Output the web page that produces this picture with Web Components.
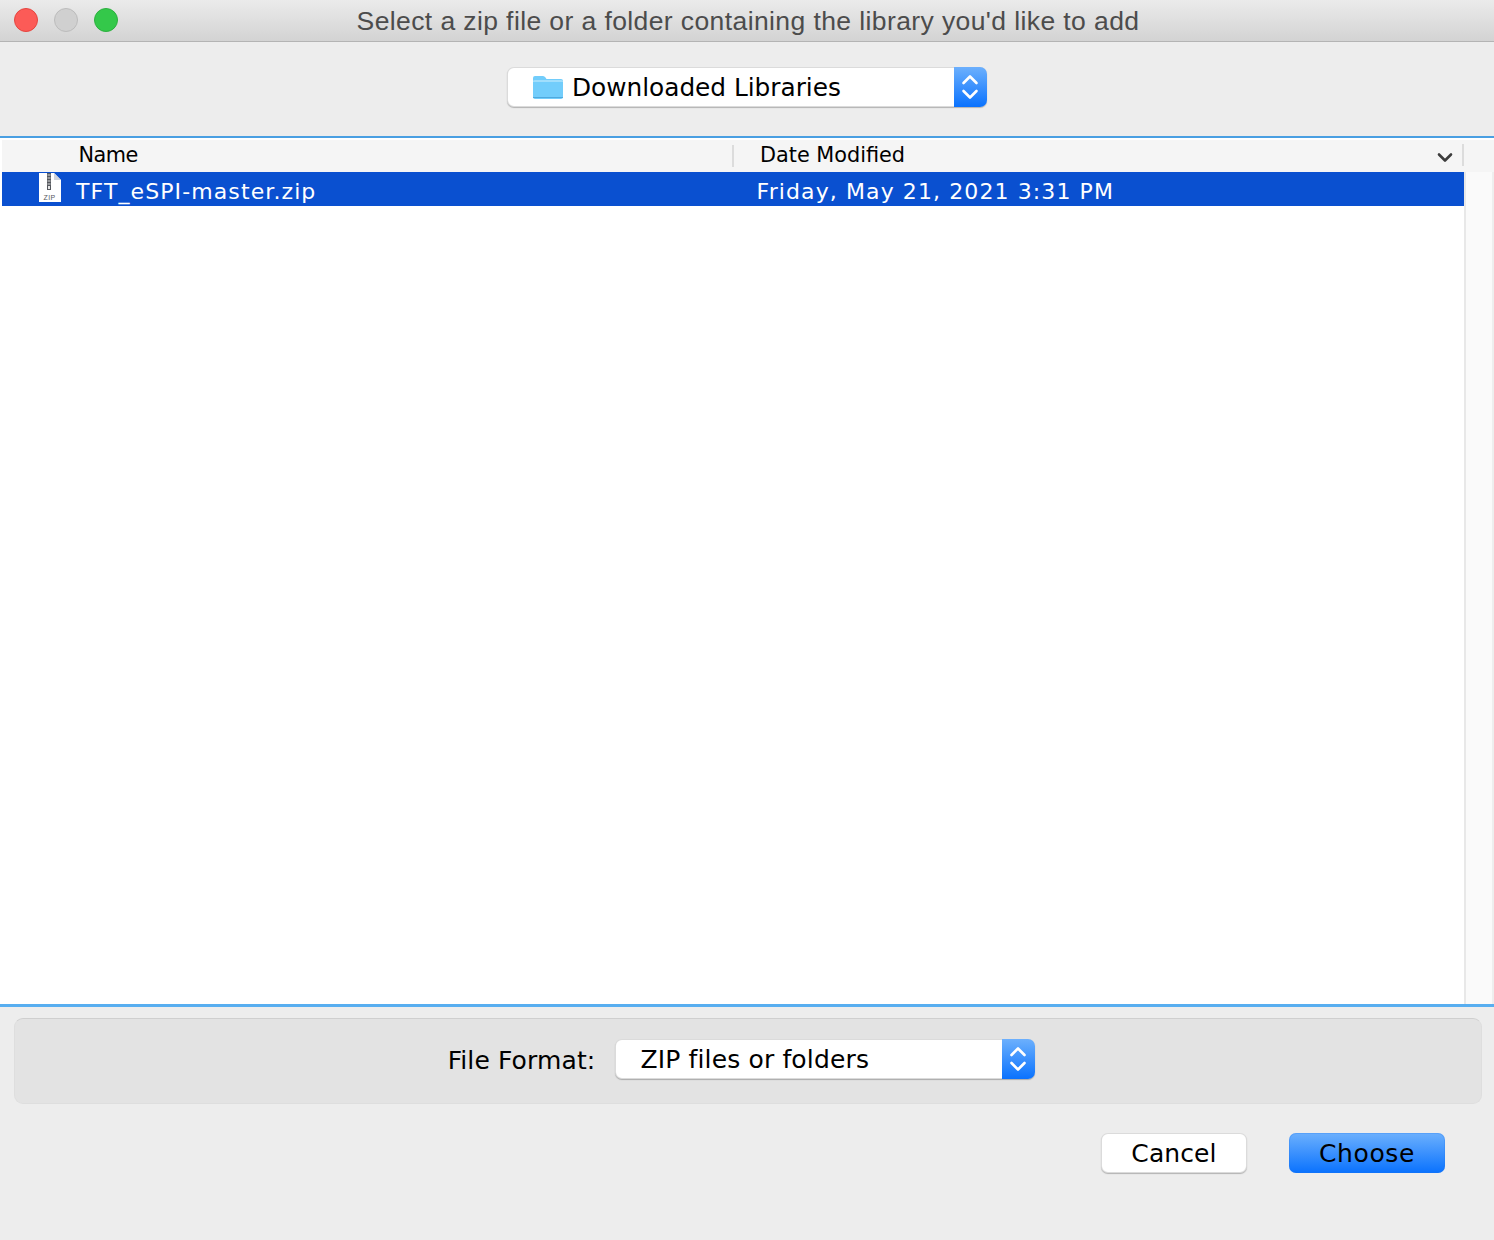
<!DOCTYPE html>
<html>
<head>
<meta charset="utf-8">
<title>Choose library</title>
<style>
  html, body { margin: 0; padding: 0; height: 100%; background: #ededed; }
  body { font-family: "DejaVu Sans", sans-serif; }
  dialog-window { height: 1240px; }
</style>
</head>
<body>

<template id="title-bar-tpl">
  <style>
    :host { display: flex; align-items: center; height: 41px; position: relative; flex: none; box-sizing: content-box;
      background: linear-gradient(#ebebeb, #d3d3d3); border-bottom: 1px solid #b4b4b4; }
    .lights { display: flex; gap: 16px; padding-left: 14px; margin-bottom: 1px; }
    .light { width: 24px; height: 24px; border-radius: 50%; box-sizing: border-box; border: 1px solid; }
    .close { background: #fc5b57; border-color: #e5453f; }
    .min { background: #d0d0d0; border-color: #bcbcbc; }
    .max { background: #34c84a; border-color: #2cb03f; }
    .title { position: absolute; left: 0; right: 0; top: 0; bottom: 0; display: flex; align-items: center; justify-content: center;
      font: 26.5px "Liberation Sans", sans-serif; letter-spacing: .4px; color: #4c4c4c; padding-top: 1px; padding-left: 2px; }
  </style>
  <div class="lights">
    <div class="light close"></div>
    <div class="light min"></div>
    <div class="light max"></div>
  </div>
  <div class="title"><slot></slot></div>
</template>

<template id="pop-select-tpl">
  <style>
    :host { display: flex; height: 40px; box-sizing: border-box; border-radius: 7px; background: #fff;
      box-shadow: inset 0 0 0 1px rgba(0,0,0,.14), 0 1px 1px rgba(0,0,0,.25); font-size: 25px; color: #000; }
    .label { flex: 1; display: flex; align-items: center; gap: 8px; min-width: 0; white-space: nowrap; }
    .label span { letter-spacing: -.02px; }
    .stepper { width: 33px; flex: none; border-radius: 0 7px 7px 0; background: linear-gradient(#6cb0fd, #0a72fe);
      display: flex; align-items: center; justify-content: center; padding-right: 1px; box-sizing: border-box; }
    ::slotted(svg) { flex: none; }
  </style>
  <div class="label"><slot name="icon"></slot><span><slot></slot></span></div>
  <div class="stepper">
    <svg width="18" height="30" viewBox="0 0 18 30" fill="none" stroke="#fff" stroke-width="2.6" stroke-linecap="round" stroke-linejoin="round">
      <path d="M2.5 11 9 4.5 15.500 11"/><path d="M2.500 19 9 25.500 15.500 19"/>
    </svg>
  </div>
</template>

<template id="file-table-tpl">
  <style>
    :host { display: flex; flex-direction: column; flex: 1; min-height: 0; background: #fff;
      border-top: 2px solid #4a9fe2; border-bottom: 3px solid #58aef0; }
    .head { height: 34px; flex: none; box-sizing: border-box; margin-left: 2px; background: #f5f5f5; border-top: 2px solid #fff;
      display: flex; align-items: center; font-size: 20.800px; color: #000; position: relative; }
    .name-h { width: 732px; padding-left: 76.500px; box-sizing: border-box; height: 22px; line-height: 20px; border-right: 2px solid #dcdcdc; flex: none; letter-spacing: -.5px; }
    .date-h { padding-left: 26px; flex: 1; line-height: 20px; height: 22px; }
    .chev { position: absolute; left: 1435px; top: 12px; }
    .sep { position: absolute; left: 1460px; top: 4px; width: 2px; height: 22px; background: #dcdcdc; }
    .body { flex: 1; display: flex; min-height: 0; }
    .rows { flex: 1; margin-left: 2px; }
    .scroll { width: 30px; flex: none; box-sizing: border-box; background: #fafafa; border-left: 2px solid #e8e8e8; border-right: 2px solid #eee; }
  </style>
  <div class="head">
    <div class="name-h">Name</div>
    <div class="date-h">Date Modified</div>
    <svg class="chev" width="16" height="11" viewBox="0 0 16 11" fill="none" stroke="#3c3c3c" stroke-width="2.600" stroke-linecap="round" stroke-linejoin="round"><path d="M2 2.500 8 8.500 14 2.500"/></svg>
    <div class="sep"></div>
  </div>
  <div class="body">
    <div class="rows"><slot></slot></div>
    <div class="scroll"></div>
  </div>
</template>

<template id="file-row-tpl">
  <style>
    :host { display: flex; align-items: center; height: 34px; box-sizing: border-box; padding-top: 5px; background: #0a50d0; color: #fff;
      font-size: 22px; letter-spacing: 1.100px; position: relative; white-space: nowrap; }
    .name { width: 754.500px; flex: none; padding-left: 74px; box-sizing: border-box; display: block; }
    svg { position: absolute; left: 34px; top: 0; }
  </style>
  <svg width="26" height="31" viewBox="0 0 26 31">
    <path d="M3 1H18L25 8V30H3Z" fill="#fff"/>
    <path d="M18 1V8H25Z" fill="#cfd3dc"/>
    <rect x="11" y="1" width="4" height="17" fill="#55585e"/>
    <path d="M11.500 3h3M11.500 6h3M11.500 9h3M11.500 12h3" stroke="#dcdcdc" stroke-width="1"/>
    <rect x="12" y="14" width="2" height="3" fill="#e6e6e6"/>
    <text x="13.500" y="28" text-anchor="middle" font-size="7" font-family="Liberation Sans, sans-serif" fill="#55585e" letter-spacing=".3">ZIP</text>
  </svg>
  <span class="name"><slot name="name"></slot></span>
  <span><slot name="date"></slot></span>
</template>

<template id="format-panel-tpl">
  <style>
    :host { display: flex; align-items: center; justify-content: center; height: 86px; box-sizing: border-box; margin: 11px 12px 0 14px;
      background: #e3e3e3; border: 1px solid #dedede; border-top-color: #cfcfcf; border-radius: 9px; font-size: 25px; color: #000; }
    .inner { display: flex; align-items: center; gap: 20px; margin-bottom: 4px; margin-right: 13px; }
    .lbl { letter-spacing: .12px; margin-top: 3px; }
  </style>
  <div class="inner"><span class="lbl"><slot name="label"></slot></span><slot></slot></div>
</template>

<template id="push-button-tpl">
  <style>
    :host { display: flex; align-items: center; justify-content: center; height: 40px; box-sizing: border-box; border-radius: 7px;
      font-size: 25px; letter-spacing: .1px; color: #000; background: #fff; flex: none;
      box-shadow: inset 0 0 0 1px rgba(0,0,0,.14), 0 1px 1px rgba(0,0,0,.25); }
    :host([primary]) { letter-spacing: .6px; background: linear-gradient(#6cb0fd, #0a72fe); box-shadow: inset 0 0 0 1px rgba(30,120,240,.25); }
  </style>
  <slot></slot>
</template>

<template id="dialog-window-tpl">
  <style>
    :host { display: flex; flex-direction: column; background: #ededed; color: #000; }
    .toolbar { height: 94px; flex: none; display: flex; justify-content: center; align-items: flex-start; padding-top: 25px; box-sizing: border-box; }
    .toolbar ::slotted(pop-select) { width: 480px; }
    .footer { flex: none; }
    .actions { display: flex; justify-content: flex-end; gap: 42px; padding: 29px 49px 67px 0; }
  </style>
  <slot name="titlebar"></slot>
  <div class="toolbar"><slot name="toolbar"></slot></div>
  <slot name="table"></slot>
  <div class="footer">
    <slot name="format"></slot>
    <div class="actions"><slot name="actions"></slot></div>
  </div>
</template>

<dialog-window>
  <title-bar slot="titlebar">Select a zip file or a folder containing the library you'd like to add</title-bar>

  <pop-select slot="toolbar">
    <svg slot="icon" style="margin-left:25px" width="32" height="26" viewBox="0 0 32 26">
      <path d="M1 4Q1 2 3 2H11Q12.500 2 13.500 3.500L14.500 5H29Q31 5 31 7V23Q31 25 29 25H3Q1 25 1 23Z" fill="#72cdfb"/>
      <path d="M1 7Q1 6 3 6H29Q31 6 31 7V8H1Z" fill="#a0defc"/>
      <path d="M1 23.500H31" stroke="#4fa9de" stroke-width="1"/>
    </svg>
    <span style="font-size:24.800px">Downloaded Libraries</span>
  </pop-select>

  <file-table slot="table">
    <file-row>
      <span slot="name">TFT_eSPI-master.zip</span>
      <span slot="date">Friday, May 21, 2021 3:31 PM</span>
    </file-row>
  </file-table>

  <format-panel slot="format">
    <span slot="label">File Format:</span>
    <pop-select style="width:420px"><span style="margin-left:25px;letter-spacing:.15px">ZIP files or folders</span></pop-select>
  </format-panel>

  <push-button slot="actions" style="width:146px">Cancel</push-button>
  <push-button slot="actions" primary style="width:156px">Choose</push-button>
</dialog-window>

<script>
  // every element here is the same: clone its template into an open shadow root
  class TemplatedElement extends HTMLElement {
    constructor() {
      super();
      this.attachShadow({ mode: "open" });
      const tpl = document.getElementById(this.localName + "-tpl");
      this.shadowRoot.appendChild(tpl.content.cloneNode(true));
    }
  }

  const names = ["title-bar", "pop-select", "file-table", "file-row", "format-panel", "push-button", "dialog-window"];
  names.forEach(name => {
    customElements.define(name, class extends TemplatedElement {});
  });
</script>
</body>
</html>
